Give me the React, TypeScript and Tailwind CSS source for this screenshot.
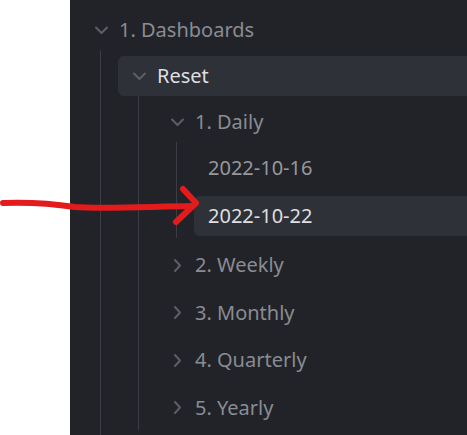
import React from "react";

type Node = {
    label: string;
    open?: boolean;
    leaf?: boolean;
    active?: boolean;
    bright?: boolean;
    children?: Node[];
};

const tree: Node = {
    label: "1. Dashboards",
    open: true,
    children: [
        {
            label: "Reset",
            open: true,
            active: true,
            bright: true,
            children: [
                {
                    label: "1. Daily",
                    open: true,
                    children: [
                        { label: "2022-10-16", leaf: true },
                        { label: "2022-10-22", leaf: true, active: true, bright: true },
                    ],
                },
                { label: "2. Weekly" },
                { label: "3. Monthly" },
                { label: "4. Quarterly" },
                { label: "5. Yearly" },
            ],
        },
    ],
};

const ChevronDown = () => (
    <svg width="15" height="15" viewBox="0 0 15 15" fill="none" className="shrink-0">
        <path d="M2 4.5 L7.5 10 L13 4.5" stroke="#5b5f67" strokeWidth="2" strokeLinecap="round" strokeLinejoin="round" />
    </svg>
);

const ChevronRight = () => (
    <svg width="15" height="15" viewBox="0 0 15 15" fill="none" className="shrink-0">
        <path d="M5 2 L10 7.5 L5 13" stroke="#5b5f67" strokeWidth="2" strokeLinecap="round" strokeLinejoin="round" />
    </svg>
);

const TreeRow = ({ node, depth = 0 }: { node: Node; depth?: number }) => {
    const rowClass = node.active ? "bg-[#2f3138]" : "";
    const textClass = node.bright ? "text-[#dedfe1]" : node.leaf ? "text-[#96989c]" : "text-[#898c92]";
    // the root list runs on past the bottom of the view
    const tailClass = depth === 0 ? "pb-[12px]" : "pb-[2px]";
    return (
        <div>
            <div className={`flex items-center h-[40px] rounded-l-md pl-[14px] gap-[10px] ${rowClass}`}>
                {!node.leaf && (node.open ? <ChevronDown /> : <ChevronRight />)}
                <span className={`text-[20px] leading-none whitespace-nowrap ${textClass}`}>{node.label}</span>
            </div>
            {node.open && node.children && (
                <div className={`ml-[20px] border-l border-[#3a3d44] pl-[17px] pt-[6px] flex flex-col gap-[7.5px] ${tailClass}`}>
                    {node.children.map((child) => (
                        <TreeRow key={child.label} node={child} depth={depth + 1} />
                    ))}
                </div>
            )}
        </div>
    );
};

export default function App() {
    return (
        <div
            className="relative flex w-[467px] h-[435px] overflow-hidden bg-white"
            style={{ fontFamily: '"Noto Sans", "Open Sans", sans-serif' }}
        >
            <div className="w-[70px] shrink-0 bg-white" />
            <div className="flex-1 bg-[#212329] pt-[10px] pl-[10px]">
                <TreeRow node={tree} />
            </div>

            {/* red annotation arrow */}
            <svg className="absolute left-0 top-0 pointer-events-none" width="467" height="435" viewBox="0 0 467 435" fill="none">
                <path
                    d="M3 203 C 30 202, 55 204, 75 207 C 100 209, 140 207, 191 206"
                    stroke="#e31b1d"
                    strokeWidth="6"
                    strokeLinecap="round"
                />
                <path
                    d="M183 189 L196 203 L176 222"
                    stroke="#e31b1d"
                    strokeWidth="6"
                    strokeLinecap="round"
                    strokeLinejoin="round"
                />
            </svg>
        </div>
    );
}
